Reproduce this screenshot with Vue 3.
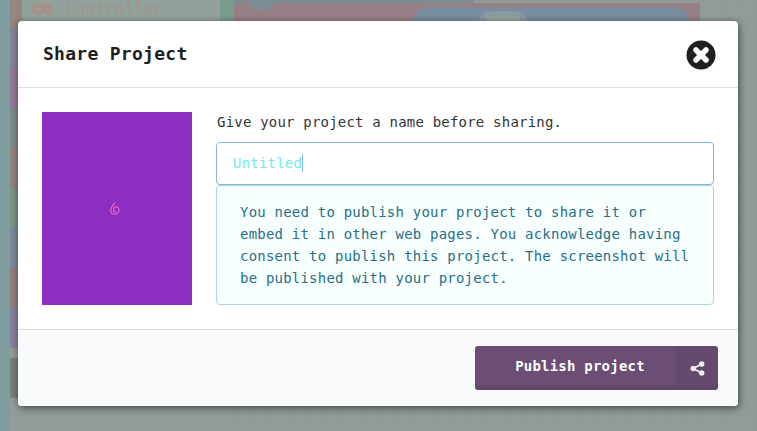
<script setup>
const strips = [
  { c: '#95867f', h: 28 },
  { c: '#85869d', h: 40 },
  { c: '#96799a', h: 40 },
  { c: '#7c8c8c', h: 40 },
  { c: '#95837f', h: 40 },
  { c: '#7a9586', h: 40 },
  { c: '#7a8c9b', h: 40 },
  { c: '#957d7f', h: 40 },
  { c: '#87829d', h: 40 },
  { c: '#929d95', h: 10 },
  { c: '#77807a', h: 40 },
  { c: '#929d99', h: 33 },
]
const copy =
  'You need to publish your project to share it or embed it in other web pages. You acknowledge having consent to publish this project. The screenshot will be published with your project.'
</script>

<template>
  <div class="page">
    <div class="backdrop">
      <div class="rail"></div>
      <div class="cats">
        <div v-for="(s, i) in strips" :key="i" class="cat" :style="{ background: s.c, height: s.h + 'px' }"></div>
      </div>
      <div class="side">
        <svg class="pad" width="23" height="13" viewBox="0 0 23 13"><path d="M6 1h11a5.500 5.500 0 0 1 0 11c-2 0-3-1-4-2h-3c-1 1-2 2-4 2A5.500 5.500 0 0 1 6 1z" fill="#a89088"/><path d="M5 5.500h5v2H5zM15 5h2v2h-2zM18 7h2v2h-2z" fill="#93a19d"/></svg>
        <span class="side-label">Controller</span>
      </div>
      <div class="gap"></div>
      <div class="canvas">
        <div class="top-strip"></div>
        <div class="block">
          <div class="notch"></div>
          <div class="pill"><div class="knob"><div class="knob-inner"></div></div></div>
        </div>
      </div>
    </div>

    <section class="modal">
      <header class="head">
        <h2 class="title">Share Project</h2>
        <button class="close" aria-label="Close">
          <svg width="30" height="30" viewBox="0 0 30 30">
            <circle cx="15" cy="15" r="14.500" fill="#1f1f1f"/>
            <path d="M10 10l10 10M20 10L10 20" stroke="#fff" stroke-width="5.500" stroke-linecap="round"/>
          </svg>
        </button>
      </header>

      <div class="body">
        <div class="shot">
          <svg width="14" height="16" viewBox="0 0 14 16" fill="none" stroke="#ec6fc4" stroke-width="1.100">
            <path d="M7 1.500C5 4 3 6 2.700 9c-.2 2.500 1.500 4.300 4 4.300s4.300-1.800 4.300-4S9.500 5.500 8 5.800 5.500 7.500 5.700 9.500s2 2 2.800.8"/>
          </svg>
        </div>
        <div class="form">
          <label class="prompt">Give your project a name before sharing.</label>
          <div class="field"><span class="value">Untitled</span><span class="caret"></span></div>
          <p class="note">{{ copy }}</p>
        </div>
      </div>

      <footer class="foot">
        <button class="publish">
          <span class="publish-label">Publish project</span>
          <span class="publish-icon">
            <svg width="15" height="15" viewBox="0 0 15 15" fill="#f1edf3">
              <circle cx="11.700" cy="3" r="2.700"/>
              <circle cx="3.200" cy="7.500" r="2.700"/>
              <circle cx="11.700" cy="12" r="2.700"/>
              <path d="M3.200 7.500L11.700 3M3.200 7.500l8.500 4.500" stroke="#f1edf3" stroke-width="1.500"/>
            </svg>
          </span>
        </button>
      </footer>
    </section>
  </div>
</template>

<style scoped>
.page {
  position: relative;
  width: 757px;
  height: 431px;
  overflow: hidden;
  background: #919b97;
  font-family: "DejaVu Sans Mono", "Liberation Mono", monospace;
}
.backdrop {
  display: flex;
  height: 100%;
}
.rail {
  width: 10px;
  background: #7f9c9e;
}
.cats {
  width: 12px;
  display: flex;
  flex-direction: column;
}
.side {
  width: 198px;
  height: 60px;
  background: #93a19d;
  display: flex;
  align-items: flex-start;
  gap: 12px;
  padding: 3px 0 0 9px;
  box-sizing: border-box;
  flex-shrink: 0;
}
.pad {
  flex-shrink: 0;
}
.side-label {
  font-size: 16px;
  line-height: 11px;
  letter-spacing: 0.1px;
  color: #a39289;
}
.gap {
  width: 14px;
  height: 60px;
  background: #7a9c8d;
}
.canvas {
  flex: 1;
  background-color: #919b97;
  background-image:
    linear-gradient(to right, rgba(0, 0, 0, 0.015) 1px, transparent 1px),
    linear-gradient(to bottom, rgba(0, 0, 0, 0.015) 1px, transparent 1px);
  background-size: 18px 18px;
}
.top-strip {
  width: 240px;
  height: 3px;
  background: #7d8d94;
}
.block {
  position: relative;
  width: 466px;
  height: 22px;
  background: #967f85;
  border-radius: 2px;
}
.notch {
  position: absolute;
  left: 16px;
  top: 0;
  width: 23px;
  height: 7px;
  background: #7d8d94;
  border-radius: 0 0 6px 6px;
}
.pill {
  position: absolute;
  left: 178px;
  top: 4px;
  width: 278px;
  height: 40px;
  background: #7a8c9f;
  border-radius: 18px;
}
.knob {
  width: 50px;
  height: 30px;
  margin: 4px 0 0 66px;
  background: #8a9ba0;
  border-radius: 14px;
  display: flex;
  justify-content: center;
  position: absolute;
  top: 0;
}
.knob-inner {
  width: 34px;
  height: 10px;
  margin-top: 5px;
  background: #94a39f;
}
.modal {
  position: absolute;
  left: 18px;
  top: 21px;
  width: 720px;
  height: 385px;
  display: flex;
  flex-direction: column;
  background: #fff;
  border-radius: 4px;
  box-shadow: 0 1px 6px rgba(0, 0, 0, 0.35), 2px 3px 8px rgba(0, 0, 0, 0.25);
  overflow: hidden;
}
.head {
  height: 67px;
  box-sizing: border-box;
  border-bottom: 1px solid #e0e0e1;
  display: flex;
  align-items: center;
  justify-content: space-between;
  padding: 0 22px 0 25px;
  flex-shrink: 0;
}
.title {
  margin: 0 0 2px;
  font-size: 18px;
  font-weight: 700;
  letter-spacing: 0.28px;
  color: #1f1f1f;
}
.close {
  padding: 0;
  border: 0;
  background: none;
  display: flex;
  margin-top: 2px;
}
.body {
  display: flex;
  gap: 24px;
  padding: 24px;
  height: 241px;
  box-sizing: border-box;
  flex-shrink: 0;
}
.shot {
  width: 150px;
  height: 193px;
  background: #8c2ec0;
  display: flex;
  align-items: center;
  justify-content: center;
  flex-shrink: 0;
}
.shot svg {
  margin: 0 0 0 -4px;
}
.form {
  flex: 1;
  display: flex;
  flex-direction: column;
}
.prompt {
  font-size: 14px;
  line-height: 20px;
  padding: 0 0 2px 1px;
  letter-spacing: 0.2px;
  color: #333;
}
.field {
  height: 43px;
  margin-top: 8px;
  box-sizing: border-box;
  border: 1px solid #85b7d9;
  border-radius: 4px;
  display: flex;
  align-items: center;
  padding: 0 0 2px 16px;
  background: #fff;
}
.value {
  font-size: 14px;
  letter-spacing: 0.2px;
  color: #72eaf0;
}
.caret {
  width: 1px;
  height: 18px;
  background: #85b7d9;
}
.note {
  margin: 0;
  height: 120px;
  box-sizing: border-box;
  border: 1px solid #a9d5de;
  border-radius: 4px;
  background: #f8ffff;
  color: #276f86;
  font-size: 14px;
  line-height: 22px;
  letter-spacing: 0.21px;
  padding: 15px 20px 0 23px;
}
.foot {
  flex: 1;
  background: #f9fafb;
  border-top: 1px solid #d9dade;
  display: flex;
  justify-content: flex-end;
  align-items: flex-start;
  padding: 16px 20px 0 0;
}
.publish {
  width: 243px;
  height: 44px;
  padding: 0;
  border: 0;
  border-radius: 3px;
  background: #6b4e75;
  box-shadow: inset 0 -4px 0 rgba(0, 0, 0, 0.1);
  display: flex;
  overflow: hidden;
  color: #fff;
  font-family: inherit;
}
.publish-label {
  flex: 1;
  padding-left: 9px;
  font-size: 14px;
  font-weight: 700;
  letter-spacing: 0.22px;
  line-height: 41px;
  text-align: center;
}
.publish-icon {
  width: 42px;
  height: 40px;
  background: rgba(0, 0, 0, 0.05);
  display: flex;
  align-items: center;
  justify-content: center;
  padding-top: 4px;
  box-sizing: border-box;
}
</style>
